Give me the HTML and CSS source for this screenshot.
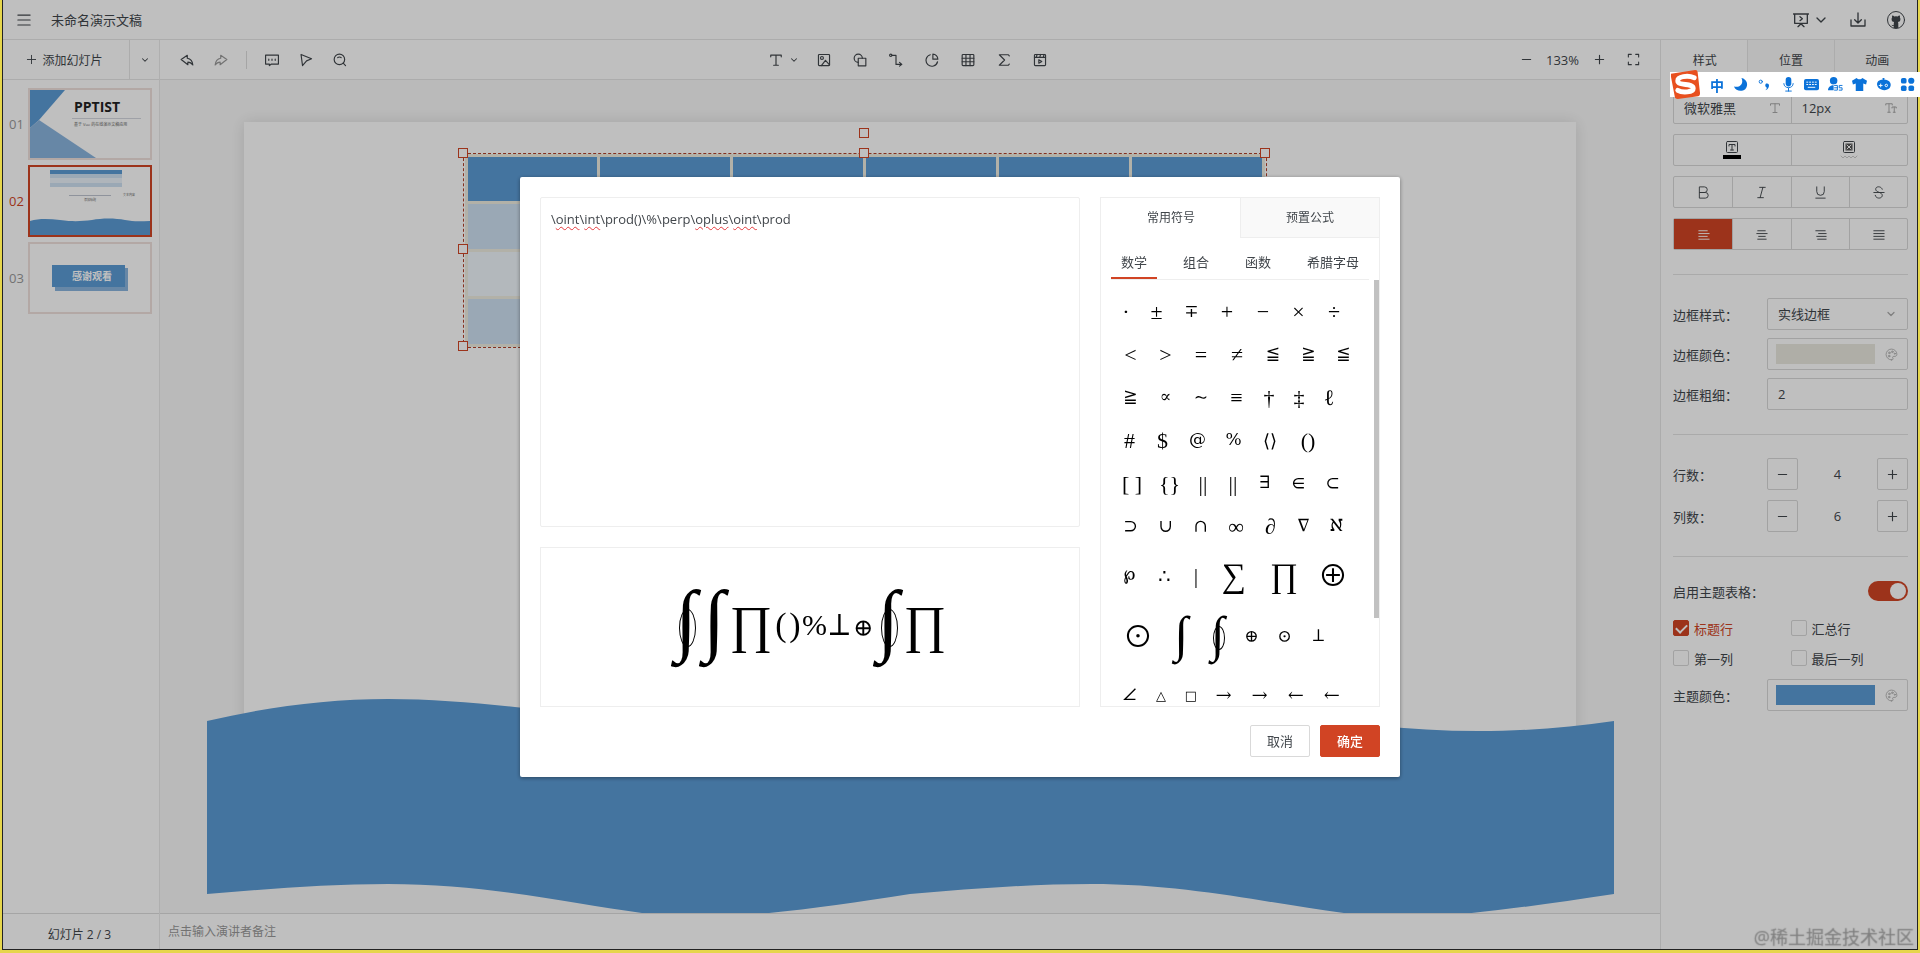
FILE: index.html
```
<!DOCTYPE html>
<html lang="zh-CN">
<head>
<meta charset="utf-8">
<title>未命名演示文稿</title>
<link rel="stylesheet" href="styles.css">
</head>
<body>
<svg class="defs" aria-hidden="true">
  <symbol id="i-caret" viewBox="0 0 48 48"><path d="M36 18 24 30 12 18"/></symbol>
  <symbol id="i-plus" viewBox="0 0 48 48"><path d="M24 6v36M6 24h36"/></symbol>
  <symbol id="i-minus" viewBox="0 0 48 48"><path d="M6 24h36"/></symbol>
  <symbol id="i-menu" viewBox="0 0 48 48"><path d="M3 7h42M3 24h42M3 41h42"/></symbol>
  <symbol id="i-undo" viewBox="0 0 48 48"><path d="M44 41C40 35 35 31 27 31v9L4 22 25 8v10c12 2 18 11 19 23Z"/></symbol>
  <symbol id="i-redo" viewBox="0 0 48 48"><path d="M4 41C8 35 13 31 21 31v9l23-18L23 8v10C11 20 5 29 4 41Z"/></symbol>
  <symbol id="i-comment" viewBox="0 0 48 48"><path d="M2 7h44v31H22l-7 5v-5H2ZM13 21v4M24 21v4M35 21v4"/></symbol>
  <symbol id="i-cursor" viewBox="0 0 48 48"><path d="M7 5 43 20 26 27 12 43Z"/></symbol>
  <symbol id="i-search" viewBox="0 0 48 48"><circle cx="22" cy="22" r="18"/><path d="m35 35 8 8M16 16c3-3 9-3 12 0"/></symbol>
  <symbol id="i-text" viewBox="0 0 48 48"><path d="M6 13V7h36v6M24 7v35M16 42h16"/></symbol>
  <symbol id="i-image" viewBox="0 0 48 48"><rect x="5" y="5" width="38" height="38" rx="3"/><circle cx="17" cy="17" r="5"/><path d="m15 43 14-18 14 16"/></symbol>
  <symbol id="i-shape" viewBox="0 0 48 48"><path d="M18 32A14 14 0 1 1 32 18"/><rect x="18" y="18" width="26" height="26"/></symbol>
  <symbol id="i-line" viewBox="0 0 48 48"><circle cx="6" cy="8" r="4"/><path d="M10 8h14v31h18M36 32l8 7-8 6"/></symbol>
  <symbol id="i-pie" viewBox="0 0 48 48"><path d="M18 6a20 20 0 1 0 25 24M27 4v17h17A17 17 0 0 0 27 4Z"/></symbol>
  <symbol id="i-table" viewBox="0 0 48 48"><rect x="4" y="5" width="40" height="38" rx="3"/><path d="M4 18h40M4 30h40M17 5v38M31 5v38"/></symbol>
  <symbol id="i-sigma" viewBox="0 0 48 48"><path d="m42 10-3-4H8l18 18L8 42h31l3-4"/></symbol>
  <symbol id="i-video" viewBox="0 0 48 48"><rect x="5" y="5" width="38" height="38" rx="3"/><path d="M5 15h38M14 5l-3 10M26 5l-3 10M38 5l-3 10M20 23v12l10-6Z"/></symbol>
  <symbol id="i-full" viewBox="0 0 48 48"><path d="M5 15V5h11M32 5h11v10M43 33v10H32M16 43H5V33"/></symbol>
  <symbol id="i-present" viewBox="0 0 48 48"><path d="M1 6h46M5 6v28h38V6M21 14l7 6-7 6M15 44l9-9 9 9"/></symbol>
  <symbol id="i-download" viewBox="0 0 48 48"><path d="M3 24v18h42V24M24 3v29M14 23l10 10 10-10"/></symbol>
  <symbol id="i-palette" viewBox="0 0 48 48"><path d="M24 44a20 20 0 1 1 20-21c0 7-5 8-11 8-5 0-6 3-4 6 3 5-1 7-5 7Z"/><circle cx="16" cy="18" r="3"/><circle cx="27" cy="14" r="3"/><circle cx="15" cy="30" r="3"/><circle cx="36" cy="21" r="2"/></symbol>
  <symbol id="i-size" viewBox="0 0 48 48"><path d="M3 12V7h26v5M16 7v34M11 41h10M28 24v-4h17v4M37 20v21M33 41h8"/></symbol>
</svg>

<div class="app">
  <header class="header">
    <button class="ib menu" aria-label="菜单"><svg><use href="#i-menu"/></svg></button>
    <h1 class="title">未命名演示文稿</h1>
    <div class="header-right">
      <button class="ib present" aria-label="放映"><svg class="big"><use href="#i-present"/></svg><svg class="caret-l"><use href="#i-caret"/></svg></button>
      <button class="ib wide" aria-label="导出"><svg class="big"><use href="#i-download"/></svg></button>
      <a class="ib wide" href="#" aria-label="GitHub"><svg class="github" viewBox="0 0 20 20"><circle cx="10" cy="10" r="8.500"/><path class="solid" d="M6.200 5.600c.8-.1 1.600.4 2.100.8a7 7 0 0 1 3.400 0c.5-.4 1.300-.9 2.100-.8.3.8.2 1.400.1 1.800.5.6.6 1.200.5 2-.2 1.800-1.200 2.400-2.500 2.600.3.5.4 1 .4 1.600v4.400H7.700v-2c-1.200.2-1.800-.4-2.200-1.200.7 0 1.100.6 2.200.4 0-.8.1-2.700.4-3.200-1.300-.2-2.300-.8-2.500-2.600-.1-.8 0-1.400.5-2-.1-.4-.2-1 .1-1.800Z"/></svg></a>
    </div>
  </header>

  <main class="main">
    <aside class="left">
      <div class="add">
        <button class="add-main"><svg><use href="#i-plus"/></svg>添加幻灯片</button>
        <button class="add-more" aria-label="版式"><svg class="caret"><use href="#i-caret"/></svg></button>
      </div>
      <ol class="thumbs">
        <li class="thumb"><span class="num">01</span>
          <svg class="pic" viewBox="0 0 120 68">
            <path class="c-blue" d="M0 0h35L9 30 0 38Z"/><path class="c-blue2" d="M0 38 9 30 66 68H0Z"/>
            <text class="t-title" x="44" y="22">PPTIST</text>
            <path class="c-line" d="M42 28h69v.6H42Z"/>
            <text class="t-sub" x="44" y="35.500">基于 Vue 的在线演示文稿应用</text>
          </svg>
        </li>
        <li class="thumb current"><span class="num">02</span>
          <svg class="pic" viewBox="0 0 120 68">
            <path class="c-blue" d="M20 3h72v4H20Z"/><path class="c-row" d="M20 7h72v4H20ZM20 16h72v4H20Z"/><path class="c-row2" d="M20 11h72v5H20Z"/>
            <path class="c-line" d="M39 28h42v.8H39Z"/>
            <text class="t-mini" x="54" y="34">添加标题</text><text class="t-mini" x="93" y="28.500">文本内容</text>
            <path class="c-blue" d="M0 54C10 51 20 52 30 53 45 55 52 54 62 53 72 51 85 51 95 53 105 55 112 54 120 54V68H0Z"/>
          </svg>
        </li>
        <li class="thumb"><span class="num">03</span>
          <svg class="pic" viewBox="0 0 120 68">
            <path class="c-blue2" d="M25 24h73v23H25Z"/><path class="c-blue" d="M22 21h73v22H22Z"/>
            <text class="t-end" x="42" y="36">感谢观看</text>
          </svg>
        </li>
      </ol>
      <div class="count">幻灯片 2 / 3</div>
    </aside>

    <section class="center">
      <div class="tools">
        <div class="tools-l">
          <button class="ib t34" aria-label="撤销"><svg><use href="#i-undo"/></svg></button>
          <button class="ib t34" aria-label="重做" disabled><svg><use href="#i-redo"/></svg></button>
          <span class="sep"></span>
          <button class="ib t34" aria-label="批注"><svg><use href="#i-comment"/></svg></button>
          <button class="ib t34" aria-label="选择"><svg><use href="#i-cursor"/></svg></button>
          <button class="ib t34" aria-label="查找"><svg><use href="#i-search"/></svg></button>
        </div>
        <div class="tools-m">
          <button class="ib t44" aria-label="文本"><svg><use href="#i-text"/></svg><svg class="caret"><use href="#i-caret"/></svg></button>
          <button class="ib t36" aria-label="图片"><svg><use href="#i-image"/></svg></button>
          <button class="ib t36" aria-label="形状"><svg><use href="#i-shape"/></svg></button>
          <button class="ib t36" aria-label="线条"><svg><use href="#i-line"/></svg></button>
          <button class="ib t36" aria-label="图表"><svg><use href="#i-pie"/></svg></button>
          <button class="ib t36" aria-label="表格"><svg><use href="#i-table"/></svg></button>
          <button class="ib t36" aria-label="公式"><svg><use href="#i-sigma"/></svg></button>
          <button class="ib t36" aria-label="视频"><svg><use href="#i-video"/></svg></button>
        </div>
        <div class="tools-r">
          <button class="ib t20" aria-label="缩小"><svg class="sm"><use href="#i-minus"/></svg></button>
          <span class="zoom">133%</span>
          <button class="ib t20" aria-label="放大"><svg class="sm"><use href="#i-plus"/></svg></button>
          <button class="ib t34 fit" aria-label="适应屏幕"><svg><use href="#i-full"/></svg></button>
        </div>
      </div>

      <div class="canvas">
        <div class="slide">
          <svg class="wave" viewBox="0 0 1407 220">
            <path d="M0 22C60 8 120 0 181 0 310 0 440 32 568 32 620 32 660 28 703 22 763 8 823 0 884 0 1013 0 1143 32 1271 32 1323 32 1363 28 1407 22V195C1320 208 1250 218 1194 218 1110 218 1010 185 884 185 823 185 763 190 703 195 620 208 547 218 490 218 410 218 310 185 181 185 120 185 60 190 0 195Z"/>
          </svg>
          <div class="selection">
            <table class="grid">
              <tr><td></td><td></td><td></td><td></td><td></td><td></td></tr>
              <tr><td></td><td></td><td></td><td></td><td></td><td></td></tr>
              <tr><td></td><td></td><td></td><td></td><td></td><td></td></tr>
              <tr><td></td><td></td><td></td><td></td><td></td><td></td></tr>
            </table>
            <i class="h rot"></i><i class="h tl"></i><i class="h tc"></i><i class="h tr"></i><i class="h ml"></i><i class="h mr"></i><i class="h bl"></i><i class="h bc"></i><i class="h br"></i>
          </div>
        </div>
      </div>
      <div class="remark"><textarea aria-label="备注" placeholder="点击输入演讲者备注"></textarea></div>
    </section>

    <aside class="right">
      <div class="ptabs"><button class="on">样式</button><button>位置</button><button>动画</button></div>
      <div class="panel">
        <div class="group g2">
          <label class="pick"><select aria-label="字体"><option>微软雅黑</option></select><svg><use href="#i-text"/></svg></label>
          <label class="pick"><select aria-label="字号"><option>12px</option></select><svg><use href="#i-size"/></svg></label>
        </div>
        <div class="group g2">
          <button aria-label="文字颜色"><svg class="tc-icon" viewBox="0 0 18 20"><rect x="3.500" y="1.500" width="11" height="11" rx="1"/><path d="M6 6V4.500h6V6M9 4.500V10M7.500 10h3"/><path class="fill-k" d="M0 15h18v4H0Z"/></svg></button>
          <button aria-label="填充颜色"><svg class="tc-icon" viewBox="0 0 18 20"><rect x="3.500" y="1.500" width="11" height="11" rx="1"/><path class="fill-g" d="M5.500 3.500h7v7h-7Z"/><path class="hatch" d="m7 5 4 4M7 9l4-4"/><path class="wav" d="m1 16 2 2 2-2 2 2 2-2 2 2 2-2 2 2 2-2"/></svg></button>
        </div>
        <div class="group g4">
          <button aria-label="加粗"><svg viewBox="0 0 16 16"><path d="M4 2h5a3 3 0 0 1 0 6H4ZM4 8h6a3 3 0 0 1 0 6H4Z"/></svg></button>
          <button aria-label="斜体"><svg viewBox="0 0 16 16"><path d="M6 2.500h6M4 13.500h6M9.500 2.500l-3 11"/></svg></button>
          <button aria-label="下划线"><svg viewBox="0 0 16 16"><path d="M4 2v5a4 4 0 0 0 8 0V2M3 14h10"/></svg></button>
          <button aria-label="删除线"><svg viewBox="0 0 16 16"><path d="M3 8h11M12 4.500C11 1 5 1 5 4.500 5 8 12 7.500 12 11c0 4-7 4-7.500 0"/></svg></button>
        </div>
        <div class="group g4">
          <button class="on" aria-label="左对齐"><svg viewBox="0 0 16 16"><path d="M3 4h9M3 7h11M3 10h9M3 13h11"/></svg></button>
          <button aria-label="居中"><svg viewBox="0 0 16 16"><path d="M4 4h8M3 7h11M5 10h7M4 13h9"/></svg></button>
          <button aria-label="右对齐"><svg viewBox="0 0 16 16"><path d="M3 4h10M6 7h8M4 10h10M5 13h9"/></svg></button>
          <button aria-label="两端对齐"><svg viewBox="0 0 16 16"><path d="M3 4h11M3 7h11M3 10h11M3 13h11"/></svg></button>
        </div>

        <hr>
        <div class="rows gap8">
          <div class="row"><label for="bs">边框样式：</label><span class="pick boxed"><select id="bs"><option>实线边框</option></select><svg class="caret"><use href="#i-caret"/></svg></span></div>
          <div class="row"><label for="bc">边框颜色：</label><button id="bc" class="color"><span class="swatch beige"></span><svg><use href="#i-palette"/></svg></button></div>
          <div class="row"><label for="bw">边框粗细：</label><input id="bw" class="field" type="text" value="2"></div>
        </div>
        <hr>
        <div class="rows gap10">
          <div class="row"><span>行数：</span><div class="step"><button aria-label="减少行"><svg class="sm"><use href="#i-minus"/></svg></button><output>4</output><button aria-label="增加行"><svg class="sm"><use href="#i-plus"/></svg></button></div></div>
          <div class="row"><span>列数：</span><div class="step"><button aria-label="减少列"><svg class="sm"><use href="#i-minus"/></svg></button><output>6</output><button aria-label="增加列"><svg class="sm"><use href="#i-plus"/></svg></button></div></div>
        </div>
        <hr>
        <div class="toggle"><label for="th">启用主题表格：</label><input id="th" class="switch" type="checkbox" checked></div>
        <div class="checks">
          <label class="ck"><input type="checkbox" checked><span>标题行</span></label>
          <label class="ck"><input type="checkbox"><span>汇总行</span></label>
          <label class="ck"><input type="checkbox"><span>第一列</span></label>
          <label class="ck"><input type="checkbox"><span>最后一列</span></label>
        </div>
        <div class="row"><label for="tc">主题颜色：</label><button id="tc" class="color"><span class="swatch blue"></span><svg><use href="#i-palette"/></svg></button></div>
      </div>
    </aside>
  </main>
</div>

<div class="mask">
  <div class="modal" role="dialog" aria-label="公式编辑器">
    <div class="editor">
      <div class="write">
        <div class="source">
          <div class="spell" aria-hidden="true">\<u>oint</u>\<u>int</u>\prod()\%\perp\<u>oplus</u>\<u>oint</u>\prod</div>
          <textarea class="latex" aria-label="LaTeX" spellcheck="false">\oint\int\prod()\%\perp\oplus\oint\prod</textarea>
        </div>
        <div class="preview">
          <span class="f-int contour">∫</span><span class="f-int">∫</span><span class="f-prod">∏</span><span class="f-par">(</span><span class="f-par">)</span><span class="f-pct">%</span><span class="f-perp">⊥</span><span class="f-plus">⊕</span><span class="f-int contour">∫</span><span class="f-prod">∏</span>
        </div>
      </div>
      <div class="symbols">
        <div class="stabs"><button class="on">常用符号</button><button>预置公式</button></div>
        <div class="cats"><button class="on">数学</button><button>组合</button><button>函数</button><button>希腊字母</button></div>
        <div class="pool">
          <div class="srow"><button class="w2">·</button><button class="w11">±</button><button class="w11 tg">∓</button><button class="w12">+</button><button class="w12">−</button><button class="w11">×</button><button class="w12">÷</button></div>
          <div class="srow"><button class="w11">&lt;</button><button class="w11">&gt;</button><button class="w12">=</button><button class="w12">≠</button><button class="w12 tg">≦</button><button class="w11 tg">≧</button><button class="w11 tg">≦</button></div>
          <div class="srow"><button class="w11 tg">≧</button><button class="w11 tg">∝</button><button class="w12 tg">∼</button><button class="w11">≡</button><button class="w6">†</button><button class="w6">‡</button><button class="w6">ℓ</button></div>
          <div class="srow"><button class="w9">#</button><button class="w9">$</button><button class="w13 tg">@</button><button class="w11 tg">%</button><button class="w14 angle">⟨⟩</button><button class="w14 fence">()</button></div>
          <div class="srow"><button class="w14 fence">[ ]</button><button class="w13 fence">{}</button><button class="w6 fence">||</button><button class="w6 fence">||</button><button class="w9 tg">∃</button><button class="w11 tg">∈</button><button class="w9 tg">⊂</button></div>
          <div class="srow"><button class="w11 tg">⊃</button><button class="w11 tg">∪</button><button class="w11 tg">∩</button><button class="w12">∞</button><button class="w9">∂</button><button class="w9 tg">∇</button><button class="w9 tg">ℵ</button></div>
          <div class="srow r7"><button class="w9 tg">℘</button><button class="w13 big-dots">∴</button><button class="w2 fence">|</button><button class="w25 big-op">∑</button><button class="w28 big-op">∏</button><button class="w22 big-o">⊕</button></div>
          <div class="srow r8"><button class="w25 big-o">⊙</button><button class="w14 big-int">∫</button><button class="w11 big-int contour">∫</button><button class="w9 tg">⊕</button><button class="w9 tg">⊙</button><button class="w11 tg">⊥</button></div>
          <div class="srow r9"><button class="w9 tg">∠</button><button class="w6 tiny">△</button><button class="w6 tiny">□</button><button class="w12 tg">→</button><button class="w12 tg">→</button><button class="w12 tg">←</button><button class="w12 tg">←</button></div>
          <span class="thumbbar"></span>
        </div>
      </div>
    </div>
    <div class="footer"><button class="btn">取消</button><button class="btn primary">确定</button></div>
  </div>
</div>

<div class="frame"></div>
<div class="ime">
  <svg class="ime-logo" viewBox="0 0 32 32"><path class="ob" d="M1 5 26 1c2 0 2 1 2.500 2L31 25c0 2-1 3-2 3L8 31c-2 0-3-1-3-2L1 8Z"/><path class="ow" d="M25 9C18 6 8 8 8 12c0 6 16 2 16 8 0 4-11 5-16 2"/></svg>
  <span class="zh">中</span>
  <svg viewBox="0 0 16 16"><path d="M9 1c6 1 8 8 4 12-4 3-10 2-12-3 6 2 11-3 8-9Z"/></svg>
  <svg viewBox="0 0 16 16"><circle class="ring" cx="4" cy="5" r="1.700"/><path d="M10 7c3-1 4 3 1 6l-2 1c1-1 2-2 1-3-2-1-1-4 0-4Z"/></svg>
  <svg viewBox="0 0 16 16"><rect x="5" y="0" width="6" height="10" rx="3"/><path class="ring" d="M3 7c0 6 10 6 10 0M8 12v3M5 15h6"/></svg>
  <svg viewBox="0 0 16 16"><rect x="0" y="2" width="16" height="12" rx="2"/><path class="wh dots" d="M2.500 5.500h11M2.500 8h11"/><path class="wh" d="M4 11h8"/></svg>
  <svg viewBox="0 0 16 16"><circle cx="6" cy="4" r="4"/><path d="M0 14c0-7 12-7 12 0Z"/><path class="bg" d="M6 8h10v7H6Z"/><path class="thin" d="M7 9h3v5H7M7 11.500h3M15 9h-3v2.500h3V14h-3"/></svg>
  <svg viewBox="0 0 16 16"><path d="M5 1c1 2 5 2 6 0l5 3-1 4-3-1v8H4V7L1 8 0 4Z"/></svg>
  <svg viewBox="0 0 16 16"><path d="M7 3V1h2v2c9 0 9 11 0 11S-2 3 7 3Z"/><path class="wh" d="M3 9h4M5 7v4"/><circle class="wh" cx="11" cy="9" r="1.300"/></svg>
  <svg viewBox="0 0 16 16"><rect x="1" y="1" width="6" height="6" rx="2"/><circle cx="12" cy="4" r="3.300"/><rect x="1" y="9" width="6" height="6" rx="2"/><rect x="9" y="9" width="6" height="6" rx="2"/></svg>
</div>
<div class="watermark">@稀土掘金技术社区</div>
</body>
</html>
```
FILE: styles.css
```
* { box-sizing: border-box; margin: 0; padding: 0; }
body {
  font-family: "Open Sans", "Noto Sans CJK SC", sans-serif;
  font-size: 13px;
  color: #41464b;
  background: #fff;
  overflow: hidden;
}
button, select, input, textarea, output { font: inherit; color: inherit; background: none; border: 0; outline: 0; }
button { cursor: pointer; }
svg { width: 14px; height: 14px; flex: none; fill: none; stroke: currentColor; stroke-width: 4; stroke-linejoin: round; stroke-linecap: round; overflow: visible; }
.defs { display: none; }
svg.caret { width: 10px; height: 10px; stroke-width: 5; }
svg.caret-l { width: 16px; height: 16px; stroke-width: 4; }
svg.big { width: 16px; height: 16px; }
svg.sm { width: 11px; height: 11px; stroke-width: 5; }

.app { height: 100vh; display: grid; grid-template-rows: 40px 1fr; }
.header { display: flex; align-items: center; padding: 0 5px 0 12px; border-bottom: 1px solid #e6e6e6; }
.ib { display: flex; align-items: center; justify-content: center; height: 32px; color: #41464b; }
.ib:disabled { color: #999; }
.menu { width: 24px; }
.title { font-size: 13px; font-weight: 400; margin-left: 15px; }
.header-right { margin-left: auto; display: flex; }
.wide { width: 38px; }
.present { width: 54px; padding-right: 2px; gap: 4px; }
svg.github { width: 20px; height: 20px; stroke-width: 1; }
.solid { fill: currentColor; stroke: none; }

.main { display: grid; grid-template-columns: 160px 1fr 260px; min-height: 0; }
.left { display: grid; grid-template-rows: 40px 1fr 40px; border-right: 1px solid #eaeaea; min-height: 0; }
.add { display: flex; border-bottom: 1px solid #e6e6e6; font-size: 12px; }
.add-main { flex: 1; display: flex; align-items: center; justify-content: center; gap: 5px; border-right: 1px solid #e6e6e6; }
.add-main svg { width: 11px; height: 11px; }
.add-more { width: 29px; display: flex; align-items: center; justify-content: center; }
.thumbs { list-style: none; padding: 8px 7px 0 9px; display: flex; flex-direction: column; gap: 5px; }
.thumb { display: flex; align-items: center; color: #999; }
.num { width: 19px; }
.pic { flex: 1; width: 124px; height: auto; border: 2px solid #efe0dc; stroke: none; overflow: hidden; }
.current { color: #d14424; }
.current .pic { border-color: #d14424; }
.c-blue { fill: #5b9bd5; }
.c-blue2 { fill: #8ab4de; }
.c-row { fill: #cee1f2; }
.c-row2 { fill: #eaf2fa; }
.c-line { fill: #aab0c0; }
.pic text { stroke: none; fill: #666; }
.pic .t-title { font-size: 14px; font-weight: 700; fill: #222; }
.pic .t-sub { font-size: 4px; }
.pic .t-mini { font-size: 3px; }
.pic .t-end { font-size: 10px; font-weight: 700; fill: #fff; }
.count { display: flex; align-items: center; justify-content: center; font-size: 12px; border-top: 1px solid #ddd; }

.center { display: grid; grid-template-rows: 40px 1fr 40px; min-width: 0; min-height: 0; }
.tools { display: grid; grid-template-columns: 1fr auto 1fr; align-items: center; border-bottom: 1px solid #e6e6e6; padding: 0 10px; }
.tools-l, .tools-m, .tools-r { display: flex; align-items: center; }
.tools-r { justify-content: flex-end; }
.sep { width: 1px; height: 18px; margin: 0 8px; background: #ddd; }
.t34 { width: 34px; }
.t36 { width: 36px; }
.t44 { width: 44px; gap: 6px; }
.t20 { width: 20px; }
.zoom { width: 53px; text-align: center; }
.fit { margin-left: 7px; }
.fit svg { width: 13px; height: 13px; }

.canvas { background: #f9f9f9; overflow: hidden; display: flex; align-items: center; justify-content: center; min-height: 0; }
.slide { position: relative; flex: none; height: 90%; aspect-ratio: 16 / 9; background: #fff; box-shadow: 0 0 15px rgba(0, 0, 0, .12); }
.wave { position: absolute; left: -37px; top: 577px; width: 1407px; height: 220px; stroke: none; fill: #5b9bd5; }
.selection { position: absolute; left: 219px; top: 31px; width: 804px; height: 195px; border: 1px dashed #b04028; padding: 0 1px; }
.grid { width: 100%; height: 100%; border-collapse: collapse; table-layout: fixed; }
.grid td { border: 3px solid #eeece1; background: #cee1f2; }
.grid tr:nth-child(1) td { background: #5b9bd5; }
.grid tr:nth-child(3) td { background: #eff6fb; }
.h { position: absolute; width: 10px; height: 10px; margin: -6px; border: 1px solid #d14424; background: #fff; }
.rot { left: 50%; top: -20px; }
.tl { left: 0; top: 0; }
.tc { left: 50%; top: 0; }
.tr { left: 100%; top: 0; }
.ml { left: 0; top: 50%; }
.mr { left: 100%; top: 50%; }
.bl { left: 0; top: 100%; }
.bc { left: 50%; top: 100%; }
.br { left: 100%; top: 100%; }
.remark { border-top: 1px solid #ddd; background: #fff; }
.remark textarea { width: 100%; height: 100%; padding: 8px; resize: none; font-size: 12px; line-height: 20px; }
.remark textarea::placeholder { color: #999; }

.right { border-left: 1px solid #e6e6e6; }
.ptabs { display: grid; grid-template-columns: repeat(3, 1fr); height: 40px; font-size: 12px; }
.ptabs button { background: #f9f9f9; border-left: 1px solid #e6e6e6; border-bottom: 1px solid #e6e6e6; }
.ptabs .on { background: #fff; border-color: #fff; }
.panel { padding: 12px; }
.group { display: grid; height: 32px; margin-bottom: 10px; border: 1px solid #d9d9d9; border-radius: 2px; }
.g2 { grid-template-columns: 1fr 1fr; }
.g4 { grid-template-columns: repeat(4, 1fr); }
.group > * + * { border-left: 1px solid #d9d9d9; }
.group button { display: flex; align-items: center; justify-content: center; }
.group button svg { width: 15px; height: 15px; stroke-width: 1; }
.group button svg.tc-icon { width: 18px; height: 20px; }
.group .on { background: #d14424; color: #fff; }
.fill-k { fill: #000; stroke: none; }
.fill-g { fill: #555; stroke: none; }
.hatch { stroke: #fff; }
.wav { stroke: #ccc; }
.pick { display: flex; align-items: center; padding: 0 10px; min-width: 0; }
.pick select { appearance: none; flex: 1; min-width: 0; }
.pick svg { width: 12px; height: 12px; color: #aaa; }
.boxed, .field, .color { height: 32px; width: 60%; border: 1px solid #d9d9d9; border-radius: 2px; }
.field { padding: 0 10px; }
.color { display: flex; align-items: center; justify-content: space-between; padding: 0 9px 0 8px; color: #aaa; }
.color svg { width: 13px; height: 13px; stroke-width: 3; }
.swatch { height: 20px; flex: 1; margin-right: 10px; }
.beige { background: #eae8df; }
.blue { background: #5b9bd5; }
hr { border: 0; border-top: 1px solid #e3e3e3; margin: 24px 0 23px; }
.rows { display: flex; flex-direction: column; }
.gap8 { gap: 8px; }
.gap10 { gap: 10px; }
.row { display: flex; align-items: center; justify-content: space-between; height: 32px; }
.step { width: 60%; display: flex; align-items: center; justify-content: space-between; }
.step button { width: 31px; height: 32px; border: 1px solid #d9d9d9; border-radius: 2px; display: flex; align-items: center; justify-content: center; }
.toggle { display: flex; align-items: center; justify-content: space-between; height: 22px; }
.switch { appearance: none; width: 40px; height: 20px; border-radius: 10px; background: #d14424; display: flex; justify-content: flex-end; padding: 2px; }
.switch::before { content: ""; width: 16px; height: 16px; border-radius: 50%; background: #fff; }
.checks { display: grid; grid-template-columns: 1fr 1fr; row-gap: 10px; margin: 16px 0 11px; }
.ck { display: flex; align-items: center; gap: 5px; height: 20px; }
.ck input { appearance: none; width: 16px; height: 16px; border: 1px solid #d9d9d9; border-radius: 2px; display: flex; justify-content: center; }
.ck input:checked { background: #d14424; border-color: #d14424; }
.ck input:checked::before { content: ""; width: 5px; height: 9px; margin-top: 1px; border: solid #fff; border-width: 0 2px 2px 0; transform: rotate(45deg); }
.ck input:checked + span { color: #d14424; }

.mask { position: fixed; inset: 0; background: rgba(0, 0, 0, .25); display: flex; align-items: center; justify-content: center; }
.modal { width: 880px; background: #fff; border-radius: 2px; padding: 20px; box-shadow: 0 1px 4px rgba(0, 0, 0, .4); }
.editor { display: grid; grid-template-columns: 1fr 280px; gap: 20px; height: 510px; }
.write { display: grid; grid-template-rows: 330px 160px; gap: 20px; }
.source { display: grid; border: 1px solid #eee; border-radius: 2px; }
.spell, .latex { grid-area: 1 / 1; padding: 11px 10px; line-height: 20px; font-size: 13px; width: 100%; height: 100%; resize: none; white-space: pre-wrap; }
.spell { color: transparent; }
.spell u { text-decoration: underline wavy #e5393c 1px; text-underline-offset: 2px; }
.preview { border: 1px solid #eee; display: flex; align-items: center; justify-content: center; }
.preview, .pool button { font-family: "Liberation Serif", "DejaVu Math TeX Gyre", "DejaVu Serif", "DejaVu Sans", serif; color: #000; }
.preview span { display: flex; justify-content: center; line-height: 76px; height: 80px; }
.preview .f-int { width: 28px; font-size: 80px; line-height: 64px; }
.preview .f-prod { width: 46px; font-size: 52px; }
.preview .f-par { width: 14px; font-size: 34px; }
.preview .f-pct { width: 25px; font-size: 30px; }
.preview .f-perp { width: 25px; font-size: 30px; }
.preview .f-plus { width: 22px; font-size: 24px; line-height: 80px; }
.contour { position: relative; }
.contour::after { content: ""; position: absolute; left: 50%; top: 50%; width: 15px; height: 36px; margin: -18px -7px; border: 1px solid #000; border-radius: 50%; }
.symbols { border: 1px solid #eee; display: grid; grid-template-rows: 40px 42px 1fr; min-height: 0; }
.stabs { display: grid; grid-template-columns: 1fr 1fr; font-size: 12px; }
.stabs button { background: #f9f9f9; border-left: 1px solid #eee; border-bottom: 1px solid #eee; }
.stabs .on { background: #fff; border-color: #fff; }
.cats { display: flex; gap: 16px; margin: 0 10px; border-bottom: 1px solid #eee; }
.cats button { padding: 8px 10px 0; border-bottom: 2px solid transparent; white-space: nowrap; }
.cats .on { border-color: #d14424; }
.pool { position: relative; overflow: hidden; padding: 11px 24px 0; min-height: 0; }
.srow { display: flex; gap: 24px; height: 43px; align-items: center; }
.pool button { display: flex; align-items: center; justify-content: center; height: 40px; line-height: 40px; font-size: 22px; white-space: nowrap; }
.pool .tg { font-family: "DejaVu Math TeX Gyre", "DejaVu Serif", "DejaVu Sans", serif; font-size: 17px; }
.pool .fence { font-size: 22px; }
.pool .angle { font-family: "DejaVu Sans", sans-serif; font-weight: 200; font-size: 18px; }
.pool .big-dots { font-family: "DejaVu Sans", sans-serif; font-size: 20px; }
.pool .tiny { font-family: "DejaVu Sans", sans-serif; font-size: 13px; }
.r7 { height: 54px; }
.r8 { height: 68px; }
.r9 { height: 50px; }
.w2 { width: 2px; }
.w6 { width: 6px; }
.w9 { width: 9px; }
.w11 { width: 11px; }
.w12 { width: 12px; }
.w13 { width: 13px; }
.w14 { width: 14px; }
.w22 { width: 22px; }
.w25 { width: 25px; }
.w28 { width: 28px; }
.pool .big-op { font-size: 34px; line-height: 36px; }
.pool .big-o { font-size: 30px; font-family: "DejaVu Sans Light", "DejaVu Sans", sans-serif; font-weight: 200; }
.pool .big-int { font-size: 50px; height: 50px; padding-bottom: 6px; }
.pool .contour::after { width: 10px; height: 22px; margin: -11px -5px; }
.thumbbar { position: absolute; right: 0; top: 0; width: 5px; height: 338px; background: #c1c1c1; }
.footer { display: flex; justify-content: flex-end; gap: 10px; margin-top: 18px; }
.btn { width: 60px; height: 32px; border: 1px solid #d9d9d9; border-radius: 2px; }
.primary { background: #d14424; border-color: #d14424; color: #fff; font-weight: 500; }

.ime { position: fixed; right: 0; top: 72px; height: 25px; width: 250px; background: #fff; color: #0b72d9; display: flex; align-items: center; justify-content: space-between; padding-right: 5px; }
.ime svg { width: 15px; height: 15px; fill: currentColor; stroke: none; }
.ime svg.ime-logo { width: 31px; height: 31px; }
.ime .zh { font-size: 14px; font-weight: 700; }
.ime .ring { fill: none; stroke: currentColor; stroke-width: 1; }
.ime .wh { fill: none; stroke: #fff; stroke-width: 1; stroke-linecap: butt; }
.ime .dots { stroke-dasharray: 2 1; }
.ime .bg { fill: #fff; }
.ime .thin { fill: none; stroke: currentColor; stroke-width: 1; }
.ob { fill: #e8501f; }
.ime .ow { fill: none; stroke: #fff; stroke-width: 5; }
.watermark { position: fixed; right: 6px; bottom: 3px; font-size: 18px; line-height: 26px; color: rgba(255, 255, 255, .25); text-shadow: 0 0 1px #555; }
.frame { position: fixed; inset: 0; pointer-events: none; border: solid #e6d64c; border-width: 0 2px 3px; }
.frame::after { content: ""; position: absolute; inset: 0; border: solid #222; border-width: 0 1px 1px; }
```
